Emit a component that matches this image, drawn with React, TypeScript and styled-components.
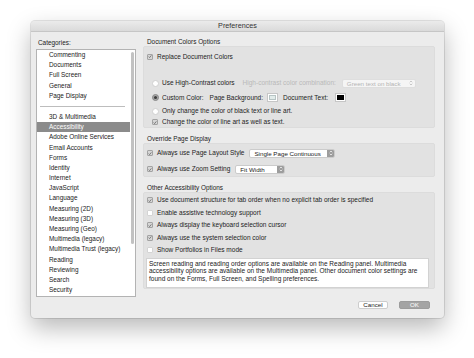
import React from "react";
import styled, { createGlobalStyle } from "styled-components";

const Global = createGlobalStyle`
  html, body { margin: 0; padding: 0; background: #ffffff; }
  body { font-family: "Liberation Sans", Arial, Helvetica, sans-serif; color: #222222; }
`;

const Page = styled.div`
  padding: 21px 0 0 31px;
  width: 474px;
  height: 358px;
  box-sizing: border-box;
  overflow: hidden;
`;

const Window = styled.div`
  width: 413px;
  height: 297px;
  background: #ececec;
  border-radius: 4px;
  box-shadow: 0 10px 24px rgba(0, 0, 0, 0.28), 0 0 0 1px rgba(0, 0, 0, 0.1);
  display: flex;
  flex-direction: column;
  overflow: hidden;
`;

const TitleBar = styled.div`
  height: 10px;
  border-bottom: 1px solid #c6c6c6;
  background: linear-gradient(#ebebeb, #dadada);
  display: flex;
  align-items: center;
  justify-content: center;
  font-size: 7.2px;
  line-height: 10px;
  color: #333333;
`;

const Body = styled.div`
  flex: 1;
  display: flex;
  gap: 7px;
  padding: 3px 9px 0 5px;
`;

const LeftCol = styled.div`
  width: 100px;
  display: flex;
  flex-direction: column;
`;

const Label = styled.div`
  font-size: 6.4px;
  line-height: 8px;
  height: 8px;
  margin: 4px 0 2px 2px;
  white-space: nowrap;
`;

const ListBox = styled.div`
  height: 248px;
  box-sizing: border-box;
  border: 1px solid #b3b3b3;
  background: #ffffff;
  display: flex;
`;

const Items = styled.div`
  flex: 1;
  display: flex;
  flex-direction: column;
`;

const Item = styled.div<{ $sel?: boolean }>`
  height: 10.2px;
  line-height: 10.2px;
  padding-left: 12px;
  font-size: 6.4px;
  white-space: nowrap;
  background: ${(p) => (p.$sel ? "#8b8b8b" : "transparent")};
  color: ${(p) => (p.$sel ? "#ffffff" : "#222222")};
`;

const Separator = styled.div`
  height: 11px;
  display: flex;
  align-items: center;
  padding: 0 5px 0 3px;
  &::after {
    content: "";
    flex: 1;
    height: 1px;
    background: #bdbdbd;
  }
`;

const ScrollTrack = styled.div`
  width: 5px;
`;

const Thumb = styled.div`
  margin: 2px 0 0 1px;
  width: 3px;
  height: 192px;
  border-radius: 2px;
  background: #c2c2c2;
`;

const RightCol = styled.div`
  flex: 1;
  display: flex;
  flex-direction: column;
`;

const SectionTitle = styled.div<{ $first?: boolean }>`
  height: 8px;
  line-height: 8px;
  margin-top: ${(p) => (p.$first ? "0" : "4px")};
  padding: 3px 0 0 4px;
  font-size: 6.4px;
  white-space: nowrap;
`;

const GroupBox = styled.div<{ $h: number; $pt: number }>`
  height: ${(p) => p.$h}px;
  box-sizing: border-box;
  background: #e2e2e2;
  border: 1px solid #dcdcdc;
  border-radius: 2px;
  display: flex;
  flex-direction: column;
  padding-top: ${(p) => p.$pt}px;
`;

const Row = styled.div<{ $h: number; $indent?: number }>`
  height: ${(p) => p.$h}px;
  display: flex;
  align-items: center;
  padding-left: ${(p) => 3 + (p.$indent || 0)}px;
  font-size: 6.5px;
  white-space: nowrap;
  flex-shrink: 0;
`;

const Text = styled.span<{ $dim?: boolean; $ml?: number }>`
  color: ${(p) => (p.$dim ? "#b9b9b9" : "#222222")};
  margin-left: ${(p) => p.$ml || 0}px;
  line-height: 8px;
`;

const CheckBox = styled.span<{ $on?: boolean }>`
  width: 6px;
  height: 6px;
  box-sizing: border-box;
  border: 1px solid ${(p) => (p.$on ? "#a3a3a3" : "#d4d4d4")};
  background: ${(p) => (p.$on ? "#d6d6d6" : "#ffffff")};
  border-radius: 1px;
  margin-right: 4px;
  display: flex;
  align-items: center;
  justify-content: center;
  flex-shrink: 0;
`;

const Radio = styled.span<{ $on?: boolean }>`
  width: 7px;
  height: 7px;
  box-sizing: border-box;
  border-radius: 50%;
  border: 1px solid ${(p) => (p.$on ? "#8a8a8a" : "#d0d0d0")};
  background: ${(p) => (p.$on ? "#a7a7a7" : "#ffffff")};
  margin-right: 3px;
  display: flex;
  align-items: center;
  justify-content: center;
  flex-shrink: 0;
  &::after {
    content: "";
    display: ${(p) => (p.$on ? "block" : "none")};
    width: 3px;
    height: 3px;
    border-radius: 50%;
    background: #3c3c3c;
  }
`;

const Swatch = styled.span<{ $fill: string; $ml: number }>`
  width: 11px;
  height: 9px;
  box-sizing: border-box;
  margin-left: ${(p) => p.$ml}px;
  border: 1px solid #c6c6c6;
  background: #ffffff;
  padding: 1px;
  display: flex;
  &::after {
    content: "";
    flex: 1;
    background: ${(p) => p.$fill};
    border: ${(p) => (p.$fill === "#000000" ? "none" : "1px solid #b7c4c4")};
  }
`;

const Select = styled.div<{ $w: number; $ml: number; $dim?: boolean }>`
  width: ${(p) => p.$w}px;
  height: 9px;
  box-sizing: border-box;
  margin-left: ${(p) => p.$ml}px;
  border: 1px solid ${(p) => (p.$dim ? "#dedede" : "#cbcbcb")};
  border-radius: 2px;
  background: ${(p) => (p.$dim ? "#f5f5f5" : "#ffffff")};
  color: ${(p) => (p.$dim ? "#b3b3b3" : "#222222")};
  display: flex;
  align-items: center;
  overflow: hidden;
  font-size: 6.2px;
`;

const SelectText = styled.span`
  flex: 1;
  padding-left: 4px;
  line-height: 7px;
`;

const Stepper = styled.span<{ $dim?: boolean }>`
  width: 7px;
  height: 100%;
  background: ${(p) => (p.$dim ? "transparent" : "#9d9d9d")};
  display: flex;
  align-items: center;
  justify-content: center;
`;

const Note = styled.div`
  height: 30px;
  box-sizing: border-box;
  margin: 1px 5px 0 2px;
  background: #ffffff;
  border: 1px solid #d2d2d2;
  padding: 1px 2px;
  font-size: 6.5px;
  line-height: 7.6px;
  white-space: nowrap;
  color: #222222;
`;

const Footer = styled.div`
  display: flex;
  justify-content: flex-end;
  gap: 11px;
  padding-right: 5px;
  margin-top: 12px;
`;

const Button = styled.div<{ $primary?: boolean }>`
  width: ${(p) => (p.$primary ? 31 : 30)}px;
  height: 8px;
  box-sizing: border-box;
  border-radius: 2px;
  border: 1px solid ${(p) => (p.$primary ? "#9c9c9c" : "#cdcdcd")};
  background: ${(p) => (p.$primary ? "#a4a4a4" : "#ffffff")};
  color: ${(p) => (p.$primary ? "#ffffff" : "#222222")};
  font-size: 6.2px;
  line-height: 6px;
  display: flex;
  align-items: center;
  justify-content: center;
`;

const Check = () => (
  <svg width="5" height="5" viewBox="0 0 8 8">
    <path d="M1.3 4.2 L3.2 6.1 L6.7 1.8" fill="none" stroke="#5c5c5c" strokeWidth="1.5" />
  </svg>
);

const Arrows = ({ color }: { color: string }) => (
  <svg width="4" height="6" viewBox="0 0 8 12">
    <path d="M1.5 4.5 L4 2 L6.5 4.5 M1.5 7.5 L4 10 L6.5 7.5" fill="none" stroke={color} strokeWidth="1.4" />
  </svg>
);

const CheckRow = ({ on, h, children }: { on?: boolean; h: number; children: React.ReactNode }) => (
  <Row $h={h}>
    <CheckBox $on={on}>{on ? <Check /> : null}</CheckBox>
    {children}
  </Row>
);

const categories1 = ["Commenting", "Documents", "Full Screen", "General", "Page Display"];
const categories2 = [
  "3D & Multimedia",
  "Accessibility",
  "Adobe Online Services",
  "Email Accounts",
  "Forms",
  "Identity",
  "Internet",
  "JavaScript",
  "Language",
  "Measuring (2D)",
  "Measuring (3D)",
  "Measuring (Geo)",
  "Multimedia (legacy)",
  "Multimedia Trust (legacy)",
  "Reading",
  "Reviewing",
  "Search",
  "Security",
];

export default function App() {
  return (
    <Page>
      <Global />
      <Window>
        <TitleBar>Preferences</TitleBar>
        <Body>
          <LeftCol>
            <Label>Categories:</Label>
            <ListBox>
              <Items>
                {categories1.map((c) => (
                  <Item key={c}>{c}</Item>
                ))}
                <Separator />
                {categories2.map((c) => (
                  <Item key={c} $sel={c === "Accessibility"}>
                    {c}
                  </Item>
                ))}
              </Items>
              <ScrollTrack>
                <Thumb />
              </ScrollTrack>
            </ListBox>
          </LeftCol>
          <RightCol>
            <SectionTitle $first>Document Colors Options</SectionTitle>
            <GroupBox $h={82} $pt={0}>
              <CheckRow on h={19}>
                <Text>Replace Document Colors</Text>
              </CheckRow>
              <Row $h={11} />
              <Row $h={12} $indent={5}>
                <Radio />
                <Text>Use High-Contrast colors</Text>
                <Text $dim $ml={8}>High-contrast color combination:</Text>
                <Select $w={74} $ml={6} $dim>
                  <SelectText>Green text on black</SelectText>
                  <Stepper $dim>
                    <Arrows color="#b5b5b5" />
                  </Stepper>
                </Select>
              </Row>
              <Row $h={17} $indent={5}>
                <Radio $on />
                <Text>Custom Color:</Text>
                <Text $ml={6}>Page Background:</Text>
                <Swatch $fill="#e2ecea" $ml={4} />
                <Text $ml={5}>Document Text:</Text>
                <Swatch $fill="#000000" $ml={7} />
              </Row>
              <Row $h={10} $indent={5}>
                <Radio />
                <Text>Only change the color of black text or line art.</Text>
              </Row>
              <Row $h={12} $indent={5}>
                <CheckBox $on>
                  <Check />
                </CheckBox>
                <Text>Change the color of line art as well as text.</Text>
              </Row>
            </GroupBox>

            <SectionTitle>Override Page Display</SectionTitle>
            <GroupBox $h={34} $pt={1}>
              <CheckRow on h={16}>
                <Text>Always use Page Layout Style</Text>
                <Select $w={86} $ml={5}>
                  <SelectText>Single Page Continuous</SelectText>
                  <Stepper>
                    <Arrows color="#ffffff" />
                  </Stepper>
                </Select>
              </CheckRow>
              <CheckRow on h={16}>
                <Text>Always use Zoom Setting</Text>
                <Select $w={50} $ml={5}>
                  <SelectText>Fit Width</SelectText>
                  <Stepper>
                    <Arrows color="#ffffff" />
                  </Stepper>
                </Select>
              </CheckRow>
            </GroupBox>

            <SectionTitle>Other Accessibility Options</SectionTitle>
            <GroupBox $h={97} $pt={1}>
              <CheckRow on h={12.5}>
                <Text>Use document structure for tab order when no explicit tab order is specified</Text>
              </CheckRow>
              <CheckRow h={12.5}>
                <Text>Enable assistive technology support</Text>
              </CheckRow>
              <CheckRow on h={12.5}>
                <Text>Always display the keyboard selection cursor</Text>
              </CheckRow>
              <CheckRow on h={12.5}>
                <Text>Always use the system selection color</Text>
              </CheckRow>
              <CheckRow h={12.5}>
                <Text>Show Portfolios in Files mode</Text>
              </CheckRow>
              <Note>
                Screen reading and reading order options are available on the Reading panel. Multimedia
                <br />
                accessibility options are available on the Multimedia panel. Other document color settings are
                <br />
                found on the Forms, Full Screen, and Spelling preferences.
              </Note>
            </GroupBox>

            <Footer>
              <Button>Cancel</Button>
              <Button $primary>OK</Button>
            </Footer>
          </RightCol>
        </Body>
      </Window>
    </Page>
  );
}
